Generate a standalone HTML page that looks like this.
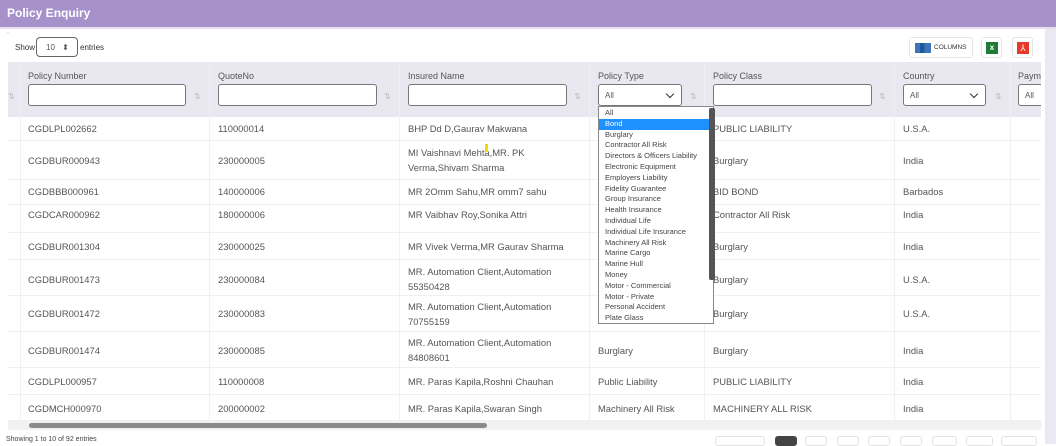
<!DOCTYPE html>
<html><head><style>
*{margin:0;padding:0;box-sizing:border-box}
body{width:1056px;height:444px;overflow:hidden;background:#fff;font-family:"Liberation Sans",sans-serif;color:#555;position:relative}
.a{position:absolute}
.hdr{left:0;top:0;width:1056px;height:27px;background:#a691cb;color:#fff;font-weight:bold;font-size:12px;padding:6px 0 0 7px}
.line{left:0;top:27px;width:1056px;height:2px;background:#e4e0ee}
.strip{left:1045px;top:29px;width:11px;height:415px;background:#ebe8f4}
.th{top:62px;left:8px;width:1033px;height:55px;background:#e9e8f1}
.lbl{font-size:9px;color:#555;top:71px}
.inp{top:84px;height:22px;border:1px solid #777;border-radius:3px;background:#fff}
.sel{font-size:8px;padding:6px 0 0 6px}
.sel.ch:after{content:"";position:absolute;right:8px;top:6px;width:5px;height:5px;border-right:1.5px solid #333;border-bottom:1.5px solid #333;transform:rotate(45deg)}
.srt{top:92px;font-size:8px;color:#bbb}
.row{left:8px;width:1033px;border-bottom:1px solid #eef0f3}
.vl{top:62px;width:1px;height:359px;background:#eef0f3}
.c{font-size:9.4px;color:#555;line-height:15px}
.dd{left:598px;top:106px;width:116px;height:218px;background:#fff;border:1px solid #888;font-size:7.5px;color:#444;line-height:10.8px;padding-top:1px}
.dd div{padding-left:6px;white-space:nowrap}
.dd .on{background:#1e90ff;color:#fff}
.pg{top:436px;height:10px;border:1px solid #e2e2e2;border-radius:3px;background:#fff}
</style></head><body>
<div class="a hdr">Policy Enquiry</div>
<div class="a line"></div>
<div class="a strip"></div>
<div class="a" style="left:7px;top:30px;font-size:6px">·</div>
<div class="a" style="left:15px;top:43px;font-size:8px;color:#333">Show</div>
<div class="a" style="left:36px;top:37px;width:42px;height:20px;border:1px solid #666;border-radius:4px;font-size:8px;padding:5px 0 0 9px">10 <span style="font-size:8px;margin-left:5px">⬍</span></div>
<div class="a" style="left:80px;top:43px;font-size:8px;color:#333">entries</div>
<div class="a" style="left:909px;top:37px;width:64px;height:21px;border:1px solid #e5e5e5;border-radius:3px"><div class="a" style="left:5px;top:5px;width:16px;height:10px;background:linear-gradient(90deg,#3b77b8 0 30%,#1c5a9c 30% 60%,#3b77b8 60%)"></div><div class="a" style="left:24px;top:6px;font-size:6.5px;color:#333">COLUMNS</div></div>
<div class="a" style="left:981px;top:37px;width:21px;height:21px;border:1px solid #e5e5e5;border-radius:3px"><div class="a" style="left:4px;top:4px;width:12px;height:12px;background:#1f7a3c;color:#fff;font-size:8px;font-weight:bold;text-align:center;line-height:12px">x</div></div>
<div class="a" style="left:1012px;top:37px;width:21px;height:21px;border:1px solid #e5e5e5;border-radius:3px"><div class="a" style="left:4px;top:4px;width:12px;height:12px;background:#e8382a;color:#fff;font-size:9px;text-align:center;line-height:12px">⅄</div></div>

<div class="a th"></div>
<div class="a srt" style="left:8px">⇅</div>
<div class="a lbl" style="left:28px">Policy Number</div><div class="a inp" style="left:28px;width:158px"></div><div class="a srt" style="left:194px">⇅</div>
<div class="a lbl" style="left:218px">QuoteNo</div><div class="a inp" style="left:218px;width:159px"></div><div class="a srt" style="left:384px">⇅</div>
<div class="a lbl" style="left:408px">Insured Name</div><div class="a inp" style="left:408px;width:159px"></div><div class="a srt" style="left:574px">⇅</div>
<div class="a lbl" style="left:598px">Policy Type</div><div class="a inp sel ch" style="left:598px;width:84px">All</div><div class="a srt" style="left:690px">⇅</div>
<div class="a lbl" style="left:713px">Policy Class</div><div class="a inp" style="left:713px;width:159px"></div><div class="a srt" style="left:879px">⇅</div>
<div class="a lbl" style="left:903px">Country</div><div class="a inp sel ch" style="left:903px;width:83px">All</div><div class="a srt" style="left:995px">⇅</div>
<div class="a lbl" style="left:1018px">Paym</div><div class="a inp sel" style="left:1018px;width:23px;border-right:none;border-radius:3px 0 0 3px">All</div>

<div class="a row" style="top:117px;height:24px"></div>
<div class="a row" style="top:141px;height:39px"></div>
<div class="a row" style="top:180px;height:25px"></div>
<div class="a row" style="top:205px;height:28px"></div>
<div class="a row" style="top:233px;height:27px"></div>
<div class="a row" style="top:260px;height:36px"></div>
<div class="a row" style="top:296px;height:36px"></div>
<div class="a row" style="top:332px;height:36px"></div>
<div class="a row" style="top:368px;height:27px"></div>
<div class="a row" style="top:395px;height:26px"></div>
<div class="a vl" style="left:20px"></div><div class="a vl" style="left:209px"></div><div class="a vl" style="left:399px"></div><div class="a vl" style="left:589px"></div><div class="a vl" style="left:704px"></div><div class="a vl" style="left:894px"></div><div class="a vl" style="left:1010px"></div>

<div class="a c" style="left:28px;top:121px">CGDLPL002662</div><div class="a c" style="left:218px;top:121px">110000014</div><div class="a c" style="left:408px;top:121px">BHP Dd D,Gaurav Makwana</div><div class="a c" style="left:713px;top:121px">PUBLIC LIABILITY</div><div class="a c" style="left:903px;top:121px">U.S.A.</div>
<div class="a c" style="left:28px;top:153px">CGDBUR000943</div><div class="a c" style="left:218px;top:153px">230000005</div><div class="a c" style="left:408px;top:145px">MI Vaishnavi Mehta,MR. PK<br>Verma,Shivam Sharma</div><div class="a c" style="left:713px;top:153px">Burglary</div><div class="a c" style="left:903px;top:153px">India</div>
<div class="a" style="left:485px;top:144px;width:3px;height:8px;background:#f5d800"></div>
<div class="a c" style="left:28px;top:184px">CGDBBB000961</div><div class="a c" style="left:218px;top:184px">140000006</div><div class="a c" style="left:408px;top:184px">MR 2Omm Sahu,MR omm7 sahu</div><div class="a c" style="left:713px;top:184px">BID BOND</div><div class="a c" style="left:903px;top:184px">Barbados</div>
<div class="a c" style="left:28px;top:207px">CGDCAR000962</div><div class="a c" style="left:218px;top:207px">180000006</div><div class="a c" style="left:408px;top:207px">MR Vaibhav Roy,Sonika Attri</div><div class="a c" style="left:713px;top:207px">Contractor All Risk</div><div class="a c" style="left:903px;top:207px">India</div>
<div class="a c" style="left:28px;top:239px">CGDBUR001304</div><div class="a c" style="left:218px;top:239px">230000025</div><div class="a c" style="left:408px;top:239px">MR Vivek Verma,MR Gaurav Sharma</div><div class="a c" style="left:713px;top:239px">Burglary</div><div class="a c" style="left:903px;top:239px">India</div>
<div class="a c" style="left:28px;top:272px">CGDBUR001473</div><div class="a c" style="left:218px;top:272px">230000084</div><div class="a c" style="left:408px;top:264px">MR. Automation Client,Automation<br>55350428</div><div class="a c" style="left:713px;top:272px">Burglary</div><div class="a c" style="left:903px;top:272px">U.S.A.</div>
<div class="a c" style="left:28px;top:306px">CGDBUR001472</div><div class="a c" style="left:218px;top:306px">230000083</div><div class="a c" style="left:408px;top:299px">MR. Automation Client,Automation<br>70755159</div><div class="a c" style="left:713px;top:306px">Burglary</div><div class="a c" style="left:903px;top:306px">U.S.A.</div>
<div class="a c" style="left:28px;top:343px">CGDBUR001474</div><div class="a c" style="left:218px;top:343px">230000085</div><div class="a c" style="left:408px;top:335px">MR. Automation Client,Automation<br>84808601</div><div class="a c" style="left:598px;top:343px">Burglary</div><div class="a c" style="left:713px;top:343px">Burglary</div><div class="a c" style="left:903px;top:343px">India</div>
<div class="a c" style="left:28px;top:374px">CGDLPL000957</div><div class="a c" style="left:218px;top:374px">110000008</div><div class="a c" style="left:408px;top:374px">MR. Paras Kapila,Roshni Chauhan</div><div class="a c" style="left:598px;top:374px">Public Liability</div><div class="a c" style="left:713px;top:374px">PUBLIC LIABILITY</div><div class="a c" style="left:903px;top:374px">India</div>
<div class="a c" style="left:28px;top:401px">CGDMCH000970</div><div class="a c" style="left:218px;top:401px">200000002</div><div class="a c" style="left:408px;top:401px">MR. Paras Kapila,Swaran Singh</div><div class="a c" style="left:598px;top:401px">Machinery All Risk</div><div class="a c" style="left:713px;top:401px">MACHINERY ALL RISK</div><div class="a c" style="left:903px;top:401px">India</div>

<div class="a" style="left:8px;top:421px;width:1033px;height:9px;background:#f1f1f1"></div>
<div class="a" style="left:29px;top:423px;width:458px;height:5px;background:#8a8a8a;border-radius:3px"></div>
<div class="a" style="left:6px;top:436px;font-size:7px;color:#444">Showing 1 to 10 of 92 entries</div>
<div class="a pg" style="left:715px;width:50px"></div>
<div class="a pg" style="left:775px;width:22px;background:#444;border-color:#444"></div>
<div class="a pg" style="left:805px;width:22px"></div><div class="a pg" style="left:837px;width:22px"></div><div class="a pg" style="left:868px;width:22px"></div><div class="a pg" style="left:900px;width:22px"></div><div class="a pg" style="left:932px;width:25px"></div><div class="a pg" style="left:966px;width:27px"></div><div class="a pg" style="left:1001px;width:36px"></div>

<div class="a dd">
<div>All</div><div class="on">Bond</div><div>Burglary</div><div>Contractor All Risk</div><div>Directors &amp; Officers Liability</div><div>Electronic Equipment</div><div>Employers Liability</div><div>Fidelity Guarantee</div><div>Group Insurance</div><div>Health Insurance</div><div>Individual Life</div><div>Individual Life Insurance</div><div>Machinery All Risk</div><div>Marine Cargo</div><div>Marine Hull</div><div>Money</div><div>Motor - Commercial</div><div>Motor - Private</div><div>Personal Accident</div><div>Plate Glass</div>
<div class="a" style="left:110px;top:1px;width:4px;height:172px;background:#555;border-radius:2px"></div>
</div>
</body></html>
